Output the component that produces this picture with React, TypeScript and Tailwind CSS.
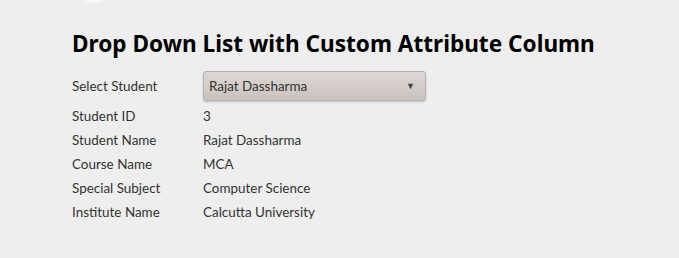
import React from "react";

const rows: [string, string][] = [
  ["Student ID", "3"],
  ["Student Name", "Rajat Dassharma"],
  ["Course Name", "MCA"],
  ["Special Subject", "Computer Science"],
  ["Institute Name", "Calcutta University"],
];

export default function App() {
  return (
    <div className="relative w-[679px] h-[258px] bg-[#eeeeee] overflow-hidden" style={{ fontFamily: "Lato, 'Open Sans', sans-serif" }}>
      <div className="absolute left-[84px] top-[-6px] w-[18px] h-[8px] rounded-full bg-white blur-[2px]" />
      <div className="pl-[72px] pt-[29px]">
        <h1 className="text-[22.6px] leading-[30px] font-bold text-black" style={{ fontFamily: "'Noto Sans', 'Open Sans', sans-serif" }}>
          Drop Down List with Custom Attribute Column
        </h1>
        <div className="mt-[12px] flex items-center h-[30px]">
          <div className="w-[131px] text-[13.45px] text-[#333333]">Select Student</div>
          <div className="w-[223px] h-[30px] rounded-[3px] border border-[#b8b0ac] bg-gradient-to-b from-[#ddd7d4] to-[#c9c1bd] shadow-[0_1px_2px_rgba(0,0,0,0.2)] flex items-center justify-between pl-[5px] pr-[10px]">
            <span className="text-[13.45px] text-[#333333]">Rajat Dassharma</span>
            <span className="text-[9px] text-[#444444]">▼</span>
          </div>
        </div>
        <div className="mt-[3px] flex flex-col">
          {rows.map(([k, v]) => (
            <div key={k} className="flex h-[24px] items-center text-[13.45px] text-[#333333]">
              <div className="w-[131px]">{k}</div>
              <div>{v}</div>
            </div>
          ))}
        </div>
      </div>
    </div>
  );
}
